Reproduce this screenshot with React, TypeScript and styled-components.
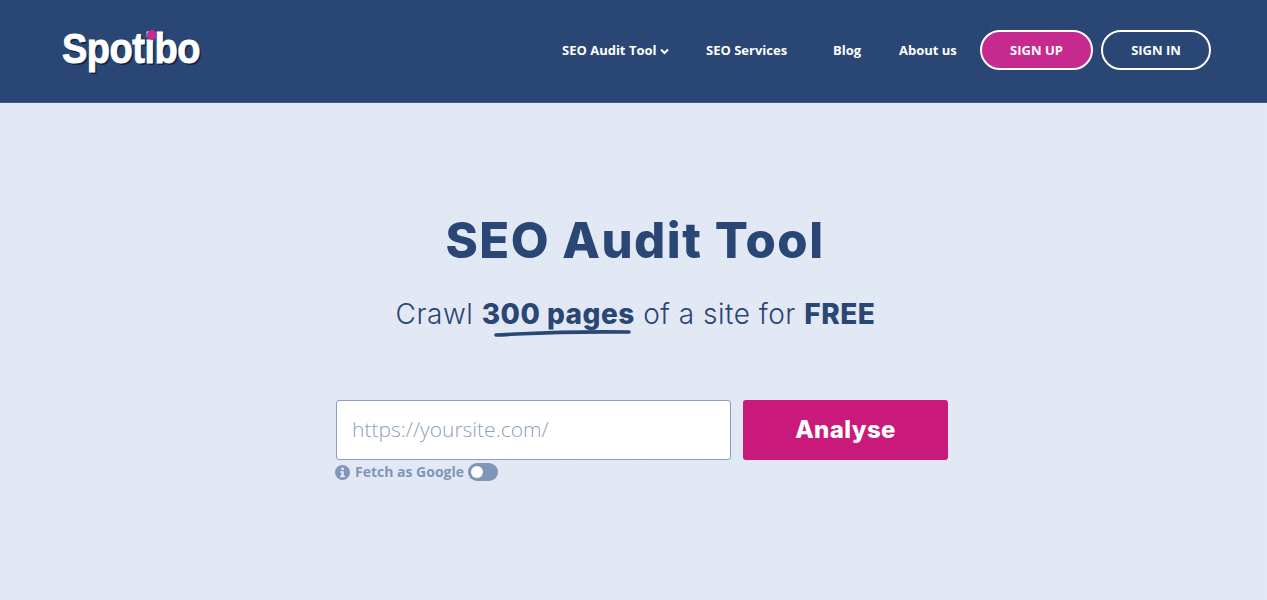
import React from "react";
import styled, { createGlobalStyle } from "styled-components";

const Global = createGlobalStyle`
  html, body { margin: 0; padding: 0; }
  body { background: #e2e9f5; font-family: "Open Sans", "Liberation Sans", sans-serif; }
`;

const Page = styled.div`
  width: 100%;
  height: 600px;
  overflow: hidden;
  background-color: #e2e9f4;
  background-image: radial-gradient(circle at 1px 1px, #dae3f0 0.6px, transparent 1px);
  background-size: 9px 9px;
`;

const Header = styled.header`
  height: 103px;
  box-sizing: border-box;
  background-color: #2a4675;
  background-image: radial-gradient(circle at 1px 1px, #2e4b7b 0.6px, transparent 1px);
  background-size: 9px 9px;
  border-bottom: 1px solid #3f5a8a;
  display: flex;
  align-items: center;
  padding: 0 56px 2px 62px;
`;

const Logo = styled.a`
  position: relative;
  display: block;
  margin-top: -4px;
  font-family: "Liberation Sans", sans-serif;
  font-weight: 700;
  font-size: 43px;
  line-height: 50px;
  letter-spacing: -0.6px;
  color: #fff;
  text-shadow: 2px 2px 0 #14233f;
  -webkit-text-stroke: 0.9px #fff;
  transform: scaleX(0.885);
  transform-origin: left center;
`;

const LogoDot = styled.span`
  position: absolute;
  left: 96px;
  top: 7px;
  width: 11px;
  height: 10px;
  border-radius: 50%;
  background: #c72a8e;
`;

const Nav = styled.nav`
  margin-left: auto;
  display: flex;
  align-items: center;
`;

const NavLink = styled.a<{ $w: number }>`
  width: ${(p) => p.$w}px;
  display: flex;
  align-items: center;
  font-size: 13px;
  font-weight: 700;
  color: #fff;
  white-space: nowrap;
`;

const Chevron = styled.svg`
  margin-left: 3px;
  margin-top: 2px;
`;

const Pill = styled.a<{ $fill?: boolean; $w: number }>`
  box-sizing: border-box;
  width: ${(p) => p.$w}px;
  height: 40px;
  border: 2px solid #fff;
  border-radius: 20px;
  display: flex;
  align-items: center;
  justify-content: center;
  font-size: 13px;
  font-weight: 700;
  color: #fff;
  background: ${(p) => (p.$fill ? "#c72a8e" : "transparent")};
  margin-right: ${(p) => (p.$fill ? "8px" : "0")};
`;

const Main = styled.main`
  display: flex;
  flex-direction: column;
  align-items: center;
`;

const Title = styled.h1`
  margin: 108px 0 0 3px;
  font-family: Inter, sans-serif;
  font-weight: 800;
  font-size: 49px;
  line-height: 60px;
  letter-spacing: 1.5px;
  color: #2a4675;
`;

const Sub = styled.p`
  margin: 25px 0 0 4px;
  font-family: Inter, sans-serif;
  font-weight: 300;
  font-size: 28px;
  line-height: 36px;
  letter-spacing: 0.5px;
  color: #2a4675;
  white-space: pre;
`;

const Strong = styled.b`
  font-weight: 800;
`;

const Underlined = styled.b`
  position: relative;
  font-weight: 800;
`;

const Scribble = styled.svg`
  position: absolute;
  left: 12px;
  bottom: -7px;
`;

const Form = styled.div`
  margin-top: 68px;
  margin-left: 17px;
  display: flex;
  gap: 12px;
`;

const Field = styled.div`
  display: flex;
  flex-direction: column;
`;

const Input = styled.input`
  box-sizing: border-box;
  width: 395px;
  height: 60px;
  border: 1px solid #8a9fc2;
  border-radius: 3px;
  background: #fff;
  padding: 0 15px 2px;
  font-family: "Open Sans", sans-serif;
  font-size: 21px;
  font-weight: 300;
  outline: none;
  &::placeholder { color: #8e9fbb; opacity: 1; }
`;

const Analyse = styled.button`
  width: 205px;
  height: 60px;
  border: 0;
  border-radius: 3px;
  padding: 0 0 2px;
  background: #c9197a;
  color: #fff;
  font-family: Inter, sans-serif;
  font-weight: 800;
  font-size: 24px;
  letter-spacing: 0.4px;
`;

const Fetch = styled.div`
  display: flex;
  align-items: center;
  height: 22px;
  margin-top: 1px;
  font-size: 14px;
  font-weight: 700;
  color: #8096b8;
`;

const FetchLabel = styled.span`
  margin-top: -2px;
`;

const Info = styled.svg`
  margin-right: 5px;
  margin-left: -1px;
`;

const Toggle = styled.span`
  position: relative;
  width: 30px;
  height: 18px;
  margin-left: 4px;
  border-radius: 9px;
  background: #8096b8;
`;

const Knob = styled.span`
  position: absolute;
  left: 3px;
  top: 3px;
  width: 12px;
  height: 12px;
  border-radius: 50%;
  background: #fff;
`;

export default function App() {
  return (
    <Page>
      <Global />
      <Header>
        <Logo>
          Spotibo
          <LogoDot />
        </Logo>
        <Nav>
          <NavLink $w={144}>
            SEO Audit Tool
            <Chevron width="9" height="7" viewBox="0 0 9 7">
              <path d="M1 1.5 L4.5 5 L8 1.5" fill="none" stroke="#fff" strokeWidth="2" />
            </Chevron>
          </NavLink>
          <NavLink $w={127}>SEO Services</NavLink>
          <NavLink $w={66}>Blog</NavLink>
          <NavLink $w={81}>About us</NavLink>
          <Pill $fill $w={113}>SIGN UP</Pill>
          <Pill $w={110}>SIGN IN</Pill>
        </Nav>
      </Header>
      <Main>
        <Title>SEO Audit Tool</Title>
        <Sub>
          Crawl{" "}
          <Underlined>
            300 pages
            <Scribble width="140" height="10" viewBox="0 0 140 10">
              <path d="M2 7 C30 6 60 3 135 4" fill="none" stroke="#2a4675" strokeWidth="3.6" strokeLinecap="round" />
            </Scribble>
          </Underlined>{" "}
          of a site for <Strong>FREE</Strong>
        </Sub>
        <Form>
          <Field>
            <Input placeholder="https://yoursite.com/" />
            <Fetch>
              <Info width="15" height="15" viewBox="0 0 15 15">
                <circle cx="7.5" cy="7.5" r="7.5" fill="#8096b8" />
                <rect x="6.2" y="2.6" width="2.6" height="2.4" fill="#e2e9f5" />
                <path d="M5.2 6.2 H8.8 V10.6 H9.9 V12.2 H5.2 V10.6 H6.3 V7.8 H5.2 Z" fill="#e2e9f5" />
              </Info>
              <FetchLabel>Fetch as Google</FetchLabel>
              <Toggle>
                <Knob />
              </Toggle>
            </Fetch>
          </Field>
          <Analyse>Analyse</Analyse>
        </Form>
      </Main>
    </Page>
  );
}
